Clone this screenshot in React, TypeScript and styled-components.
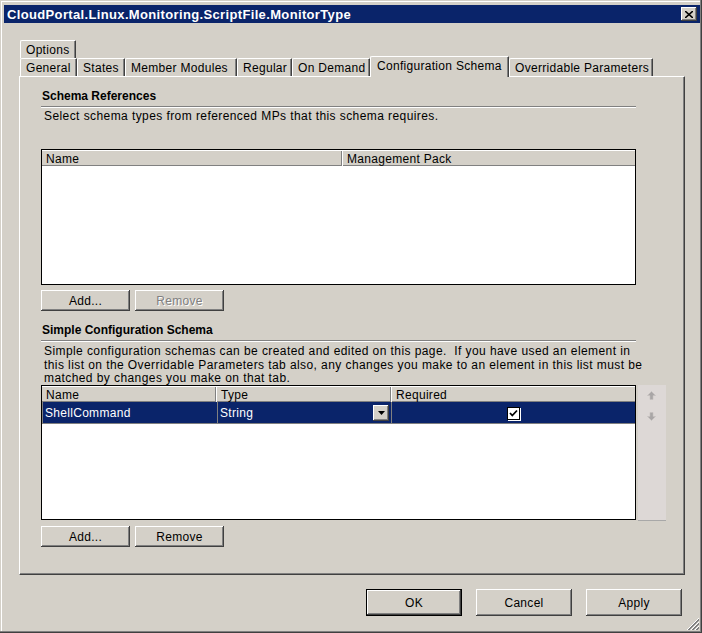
import React from "react";
import styled, { createGlobalStyle } from "styled-components";

const GlobalStyle = createGlobalStyle`
  html, body {
    margin: 0;
    padding: 0;
    background: #d4d0c8;
  }
  body {
    font-family: "Liberation Sans", Arial, sans-serif;
    font-size: 12px;
    letter-spacing: 0.3px;
    color: #000;
  }
  * {
    box-sizing: border-box;
  }
`;

const Window = styled.div`
  position: relative;
  width: 702px;
  height: 633px;
  padding: 5px 2px 0 4px;
  background: #d4d0c8;
  box-shadow: inset -1px -1px 0 #404040, inset -2px -2px 0 #808080,
    inset 1px 1px 0 #d4d0c8, inset 2px 2px 0 #fff;
  display: flex;
  flex-direction: column;
`;

const TitleBar = styled.div`
  height: 18px;
  background: #0a246a;
  color: #fff;
  display: flex;
  align-items: center;
  justify-content: space-between;
  padding: 0 3px 0 3px;
`;

const TitleText = styled.span`
  font-weight: bold;
  font-size: 13px;
  letter-spacing: 0.35px;
  white-space: nowrap;
`;

const CloseButton = styled.div`
  width: 16px;
  height: 14px;
  background: #d4d0c8;
  box-shadow: inset -1px -1px 0 #404040, inset 1px 1px 0 #fff,
    inset -2px -2px 0 #808080;
  display: flex;
  align-items: center;
  justify-content: center;
`;

const TabArea = styled.div`
  margin: 17px 0 0 16px;
  display: flex;
  flex-direction: column;
`;

const TabRow = styled.div`
  height: 18px;
  display: flex;
  align-items: flex-end;
`;

const Tab = styled.div<{ $w: number; $active?: boolean }>`
  position: relative;
  z-index: ${(p) => (p.$active ? 2 : 1)};
  width: ${(p) => p.$w}px;
  height: ${(p) => (p.$active ? 21 : 18)}px;
  margin-bottom: ${(p) => (p.$active ? -1 : 0)}px;
  background: #d4d0c8;
  border-top: 1px solid #fff;
  border-left: 1px solid #fff;
  border-right: 1px solid #404040;
  border-top-left-radius: 2px;
  border-top-right-radius: 1px;
  box-shadow: inset -1px 0 0 #808080;
  padding: 1px 0 0 ${(p) => (p.$active ? 6 : 5)}px;
  line-height: 16px;
  white-space: nowrap;
  overflow: hidden;
`;

const Panel = styled.div`
  margin-left: 15px;
  width: 666px;
  height: 499px;
  border-top: 1px solid #fff;
  border-left: 1px solid #fff;
  border-right: 1px solid #404040;
  border-bottom: 1px solid #404040;
  box-shadow: inset -1px -1px 0 #808080;
  padding: 12px 0 0 21px;
  display: flex;
  flex-direction: column;
`;

const Heading = styled.div<{ $top: number }>`
  margin-top: ${(p) => p.$top}px;
  width: 595px;
  height: 14px;
  line-height: 14px;
  padding-left: 1px;
  font-weight: bold;
  letter-spacing: 0;
`;

const Separator = styled.div`
  margin-top: 3px;
  width: 595px;
  height: 2px;
  border-top: 1px solid #808080;
  border-bottom: 1px solid #fff;
`;

const Description = styled.div<{ $h: number; $top: number }>`
  margin-top: ${(p) => p.$top}px;
  height: ${(p) => p.$h}px;
  padding-left: 3px;
  line-height: 13.5px;
  letter-spacing: 0.42px;
  overflow: hidden;
  white-space: pre;
`;

const ListRow = styled.div<{ $top: number }>`
  margin-top: ${(p) => p.$top}px;
  display: flex;
  gap: 2px;
`;

const ListBox = styled.div<{ $h: number }>`
  width: 595px;
  height: ${(p) => p.$h}px;
  border: 1px solid #000;
  background: #fff;
`;

const HeaderRow = styled.div<{ $cols: string }>`
  display: grid;
  grid-template-columns: ${(p) => p.$cols};
  height: 16px;
  background: #d4d0c8;
  border-top: 1px solid #fff;
  border-bottom: 1px solid #808080;
`;

const HeaderCell = styled.div<{ $last?: boolean }>`
  padding: 1px 0 0 4px;
  line-height: 14px;
  white-space: nowrap;
  border-right: ${(p) => (p.$last ? "none" : "1px solid #fff")};
  box-shadow: ${(p) => (p.$last ? "none" : "inset -1px 0 0 #808080")};
  background-clip: padding-box;
`;

const DataRow = styled.div<{ $cols: string }>`
  display: grid;
  grid-template-columns: ${(p) => p.$cols};
  height: 22px;
  background: #0a246a;
  color: #fff;
  border-left: 1px solid #808080;
  border-bottom: 1px solid #808080;
`;

const DataCell = styled.div<{ $last?: boolean }>`
  display: flex;
  align-items: center;
  justify-content: space-between;
  padding: 1px 2px 0 2px;
  border-right: ${(p) => (p.$last ? "none" : "1px solid #808080")};
  white-space: nowrap;
`;

const CenterCell = styled(DataCell)`
  justify-content: center;
`;

const DropButton = styled.div`
  width: 16px;
  height: 16px;
  background: #d4d0c8;
  box-shadow: inset -1px -1px 0 #404040, inset 1px 1px 0 #fff,
    inset -2px -2px 0 #808080;
  display: flex;
  align-items: center;
  justify-content: center;
`;

const CheckBox = styled.div`
  width: 13px;
  height: 13px;
  background: #fff;
  border: 1px solid #000;
  box-shadow: 1px 1px 0 #fff;
  display: flex;
  align-items: center;
  justify-content: center;
`;

const ArrowColumn = styled.div`
  width: 28px;
  height: 136px;
  background: #ddd8d6;
  border-bottom: 1px solid #a8a8a8;
  display: flex;
  flex-direction: column;
  align-items: center;
  padding: 6px 2px 0 0;
  gap: 12px;
`;

const ButtonRow = styled.div<{ $top: number }>`
  margin-top: ${(p) => p.$top}px;
  display: flex;
  gap: 5px;
`;

const Button = styled.button<{ $w: number; $h: number; $default?: boolean }>`
  width: ${(p) => p.$w}px;
  height: ${(p) => p.$h}px;
  padding: 0;
  margin: 0;
  font-family: "Liberation Sans", Arial, sans-serif;
  font-size: 12px;
  letter-spacing: 0.3px;
  color: #000;
  background: #d4d0c8;
  border: ${(p) => (p.$default ? "1px solid #000" : "none")};
  box-shadow: inset -1px -1px 0 #404040, inset 1px 1px 0 #fff,
    inset -2px -2px 0 #808080;
  &:disabled {
    color: #808080;
    text-shadow: 1px 1px 0 #fff;
  }
`;

const Footer = styled.div`
  margin-top: 14px;
  padding-right: 18px;
  display: flex;
  justify-content: flex-end;
  gap: 14px;
`;

const Grip = styled.svg`
  position: absolute;
  right: 3px;
  bottom: 3px;
`;

const topTabs = [{ label: "Options", width: 56 }];
const bottomTabs = [
  { label: "General", width: 57 },
  { label: "States", width: 48 },
  { label: "Member Modules", width: 112 },
  { label: "Regular", width: 55 },
  { label: "On Demand", width: 78 },
  { label: "Configuration Schema", width: 139, active: true },
  { label: "Overridable Parameters", width: 144 },
];

const schemaText = [
  "Simple configuration schemas can be created and edited on this page.  If you have used an element in",
  "this list on the Overridable Parameters tab also, any changes you make to an element in this list must be",
  "matched by changes you make on that tab.",
];

const Arrow = ({ down }: { down?: boolean }) => (
  <svg width="9" height="9" viewBox="0 0 9 9">
    <path
      d="M4.5 0.5 L8.5 4.5 L6 4.5 L6 8.5 L3 8.5 L3 4.5 L0.5 4.5 Z"
      fill="#a9a6a6"
      stroke="#c4c0be"
      strokeWidth="0.6"
      transform={down ? "rotate(180 4.5 4.5)" : undefined}
    />
  </svg>
);

const App = () => {
  return (
    <>
      <GlobalStyle />
      <Window>
        <TitleBar>
          <TitleText>CloudPortal.Linux.Monitoring.ScriptFile.MonitorType</TitleText>
          <CloseButton>
            <svg width="8" height="7" viewBox="0 0 8 7">
              <path d="M0 0 L8 7 M8 0 L0 7" stroke="#000" strokeWidth="1.6" />
            </svg>
          </CloseButton>
        </TitleBar>

        <TabArea>
          <TabRow>
            {topTabs.map((t) => (
              <Tab key={t.label} $w={t.width}>
                {t.label}
              </Tab>
            ))}
          </TabRow>
          <TabRow>
            {bottomTabs.map((t) => (
              <Tab key={t.label} $w={t.width} $active={t.active}>
                {t.label}
              </Tab>
            ))}
          </TabRow>
        </TabArea>

        <Panel>
          <Heading $top={0}>Schema References</Heading>
          <Separator />
          <Description $h={14} $top={2}>
            Select schema types from referenced MPs that this schema requires.
          </Description>
          <ListRow $top={25}>
            <ListBox $h={136}>
              <HeaderRow $cols="301px 1fr">
                <HeaderCell>Name</HeaderCell>
                <HeaderCell $last>Management Pack</HeaderCell>
              </HeaderRow>
            </ListBox>
          </ListRow>
          <ButtonRow $top={5}>
            <Button $w={89} $h={21}>Add...</Button>
            <Button $w={89} $h={21} disabled>
              Remove
            </Button>
          </ButtonRow>

          <Heading $top={12}>Simple Configuration Schema</Heading>
          <Separator />
          <Description $h={40} $top={3}>
            {schemaText.map((l) => (
              <div key={l}>{l}</div>
            ))}
          </Description>
          <ListRow $top={0}>
            <ListBox $h={135}>
              <HeaderRow $cols="175px 175px 1fr">
                <HeaderCell>Name</HeaderCell>
                <HeaderCell>Type</HeaderCell>
                <HeaderCell $last>Required</HeaderCell>
              </HeaderRow>
              <DataRow $cols="175px 174px 1fr">
                <DataCell>ShellCommand</DataCell>
                <DataCell>
                  <span>String</span>
                  <DropButton>
                    <svg width="7" height="4" viewBox="0 0 7 4">
                      <path d="M0 0 L7 0 L3.5 4 Z" fill="#000" />
                    </svg>
                  </DropButton>
                </DataCell>
                <CenterCell $last>
                  <CheckBox>
                    <svg width="9" height="9" viewBox="0 0 9 9">
                      <path d="M1 4 L3.3 6.5 L8 1.5" stroke="#000" strokeWidth="1.8" fill="none" />
                    </svg>
                  </CheckBox>
                </CenterCell>
              </DataRow>
            </ListBox>
            <ArrowColumn>
              <Arrow />
              <Arrow down />
            </ArrowColumn>
          </ListRow>
          <ButtonRow $top={5}>
            <Button $w={89} $h={21}>Add...</Button>
            <Button $w={89} $h={21}>Remove</Button>
          </ButtonRow>
        </Panel>

        <Footer>
          <Button $w={96} $h={27} $default>
            OK
          </Button>
          <Button $w={96} $h={27}>Cancel</Button>
          <Button $w={96} $h={27}>Apply</Button>
        </Footer>

        <Grip width="12" height="12" viewBox="0 0 12 12">
          {[0, 4, 8].map((k) => (
            <g key={k}>
              <line x1={k} y1={12} x2={12} y2={k} stroke="#fff" strokeWidth="1" />
              <line x1={k + 1} y1={12} x2={12} y2={k + 1} stroke="#808080" strokeWidth="1" />
              <line x1={k + 2} y1={12} x2={12} y2={k + 2} stroke="#808080" strokeWidth="1" />
            </g>
          ))}
        </Grip>
      </Window>
    </>
  );
};

export default App;
